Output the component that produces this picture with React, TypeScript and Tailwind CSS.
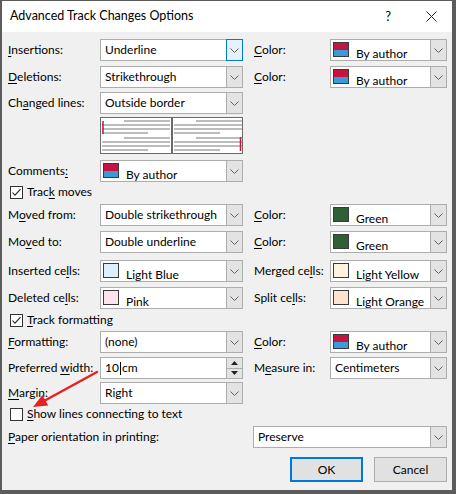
import type { ReactNode } from 'react'

const FONT = '[font-family:Lato,"Noto_Sans",sans-serif]'

function mn(text: string, k: number) {
  return (
    <>
      {text.slice(0, k)}
      <span className="underline underline-offset-[2px]">{text[k]}</span>
      {text.slice(k + 1)}
    </>
  )
}

function Chevron() {
  return (
    <svg width="9" height="5" viewBox="0 0 9 5">
      <path d="M0.5 0.5 L4.5 4.5 L8.5 0.5" fill="none" stroke="#606060" strokeWidth="1" />
    </svg>
  )
}

function Swatch({ kind }: { kind: string }) {
  if (kind === 'author') {
    return (
      <span className="flex h-[15px] w-[16px] shrink-0 flex-col border border-[#3a3a3a]">
        <span className="flex-1 bg-[#c4143f]" />
        <span className="flex-1 bg-[#3d9ad8]" />
      </span>
    )
  }
  return <span className={`h-[15px] w-[16px] shrink-0 border border-[#3a3a3a] ${kind}`} />
}

interface ComboProps {
  w: string
  text: string
  swatch?: string
  focus?: boolean
  pad?: string
}

function Combo({ w, text, swatch, focus, pad = 'pl-[4px]' }: ComboProps) {
  return (
    <div className={`flex h-[22px] shrink-0 ${w}`}>
      {swatch ? (
        <div className="flex flex-1 items-start gap-[7px] border border-r-0 border-[#adadad] bg-white pl-[2px] pt-[2px]">
          <Swatch kind={swatch} />
          <span className="mt-[4px] leading-[15px]">{text}</span>
        </div>
      ) : (
        <div className={`flex flex-1 items-center border border-r-0 border-[#adadad] bg-white ${pad}`}>{text}</div>
      )}
      <div
        className={`flex w-[17px] items-center justify-center border ${
          focus ? 'border-[#0078d7] bg-[#e5f1fb]' : 'border-[#adadad] bg-[#e3e3e3]'
        }`}
      >
        <Chevron />
      </div>
    </div>
  )
}

function Check({ on }: { on?: boolean }) {
  return (
    <span className="flex h-[13px] w-[13px] shrink-0 items-center justify-center border border-[#333333] bg-white">
      {on && (
        <svg width="11" height="11" viewBox="0 0 11 11">
          <path d="M1.5 5.5 L4 8.2 L9.5 2.2" fill="none" stroke="#222222" strokeWidth="1.1" />
        </svg>
      )}
    </span>
  )
}

function Row({ gap, children }: { gap: string; children: ReactNode }) {
  return <div className={`flex h-[22px] items-center ${gap}`}>{children}</div>
}

function Label({ children }: { children: ReactNode }) {
  return <div className="w-[92px] shrink-0 whitespace-nowrap">{children}</div>
}

function RLabel({ children }: { children: ReactNode }) {
  return <div className="ml-[11px] w-[76px] shrink-0 whitespace-nowrap">{children}</div>
}

function Preview() {
  const lines = (x: number) => (
    <g stroke="#a6a6a6" strokeWidth="1.6">
      <line x1={x + 23} y1="4" x2={x + 69} y2="4" />
      <line x1={x + 1} y1="8" x2={x + 69} y2="8" />
      <line x1={x + 1} y1="12" x2={x + 69} y2="12" />
      <line x1={x + 1} y1="16" x2={x + 47} y2="16" />
      <line x1={x + 23} y1="21" x2={x + 69} y2="21" />
      <line x1={x + 1} y1="25" x2={x + 69} y2="25" />
      <line x1={x + 1} y1="29" x2={x + 69} y2="29" />
      <line x1={x + 1} y1="33" x2={x + 47} y2="33" />
    </g>
  )
  return (
    <svg width="143" height="37" viewBox="0 0 143 37" className="block">
      <rect x="0.5" y="0.5" width="142" height="36" fill="#ffffff" stroke="#6b6b6b" />
      <line x1="72" y1="0" x2="72" y2="37" stroke="#6b6b6b" strokeWidth="2" />
      {lines(1)}
      {lines(73)}
      <line x1="3" y1="4" x2="3" y2="17" stroke="#c4143f" strokeWidth="1.5" />
      <line x1="140.5" y1="20" x2="140.5" y2="34" stroke="#c4143f" strokeWidth="1.5" />
    </svg>
  )
}

export default function App() {
  return (
    <div className={`relative h-[494px] w-[456px] overflow-hidden bg-[#5c5c5c] pt-[1px] text-[12px] text-black ${FONT}`}>
      <div className="ml-[2px] flex h-[489px] w-[450px] flex-col bg-[#f0f0f0]">
        <div className="flex h-[31px] items-center bg-white pl-[8px]">
          <span className="text-[12.5px]">Advanced Track Changes Options</span>
          <span className="ml-auto text-[13px]">?</span>
          <svg width="11" height="11" viewBox="0 0 11 11" className="ml-[35px] mr-[15px]">
            <path d="M0.5 0.5 L10.5 10.5 M10.5 0.5 L0.5 10.5" stroke="#222" strokeWidth="1" />
          </svg>
        </div>

        <div className="flex flex-col pl-[6px] pr-[5px] pt-[7px]">
          <Row gap="">
            <Label>{mn('Insertions:', 0)}</Label>
            <Combo w="w-[143px]" text="Underline" focus />
            <RLabel>{mn('Color:', 0)}</RLabel>
            <Combo w="w-[117px]" text="By author" swatch="author" />
          </Row>
          <Row gap="mt-[5px]">
            <Label>{mn('Deletions:', 0)}</Label>
            <Combo w="w-[143px]" text="Strikethrough" />
            <RLabel>{mn('Color:', 0)}</RLabel>
            <Combo w="w-[117px]" text="By author" swatch="author" />
          </Row>
          <Row gap="mt-[4px]">
            <Label>{mn('Changed lines:', 2)}</Label>
            <Combo w="w-[143px]" text="Outside border" />
          </Row>
          <div className="mt-[3px] flex">
            <div className="w-[92px]" />
            <Preview />
          </div>
          <Row gap="mt-[6px]">
            <Label>{mn('Comments:', 8)}</Label>
            <Combo w="w-[143px]" text="By author" swatch="author" />
          </Row>
          <div className="mt-[2px] flex h-[16px] items-center gap-[4px] pl-[2px]">
            <Check on />
            <span>{mn('Track moves', 4)}</span>
          </div>
          <Row gap="mt-[4px]">
            <Label>{mn('Moved from:', 1)}</Label>
            <Combo w="w-[143px]" text="Double strikethrough" />
            <RLabel>{mn('Color:', 0)}</RLabel>
            <Combo w="w-[117px]" text="Green" swatch="bg-[#2e5f35]" />
          </Row>
          <Row gap="mt-[5px]">
            <Label>{mn('Moved to:', 2)}</Label>
            <Combo w="w-[143px]" text="Double underline" />
            <RLabel>{mn('Color:', 0)}</RLabel>
            <Combo w="w-[117px]" text="Green" swatch="bg-[#2e5f35]" />
          </Row>
          <Row gap="mt-[7px]">
            <Label>{mn('Inserted cells:', 11)}</Label>
            <Combo w="w-[143px]" text="Light Blue" swatch="bg-[#ddeefc]" />
            <RLabel>{mn('Merged cells:', 9)}</RLabel>
            <Combo w="w-[117px]" text="Light Yellow" swatch="bg-[#fff3dd]" />
          </Row>
          <Row gap="mt-[5px]">
            <Label>{mn('Deleted cells:', 10)}</Label>
            <Combo w="w-[143px]" text="Pink" swatch="bg-[#fce4ee]" />
            <RLabel>{mn('Split cells:', 8)}</RLabel>
            <Combo w="w-[117px]" text="Light Orange" swatch="bg-[#fde2d0]" />
          </Row>
          <div className="mt-[3px] flex h-[16px] items-center gap-[4px] pl-[2px]">
            <Check on />
            <span>{mn('Track formatting', 0)}</span>
          </div>
          <Row gap="mt-[3px]">
            <Label>{mn('Formatting:', 0)}</Label>
            <Combo w="w-[143px]" text="(none)" />
            <RLabel>{mn('Color:', 0)}</RLabel>
            <Combo w="w-[117px]" text="By author" swatch="author" />
          </Row>
          <Row gap="mt-[4px]">
            <Label>{mn('Preferred width:', 10)}</Label>
            <div className="flex h-[22px] w-[143px] shrink-0">
              <div className="flex flex-1 items-center border border-r-0 border-[#adadad] bg-white pl-[4px]">
                10<span className="mx-[1px] h-[13px] w-px bg-black" />
                cm
              </div>
              <div className="flex w-[17px] flex-col border border-[#adadad] bg-[#e3e3e3]">
                <div className="flex flex-1 items-center justify-center border-b border-[#adadad]">
                  <svg width="7" height="4" viewBox="0 0 7 4">
                    <path d="M0 4 L3.5 0 L7 4 Z" fill="#222" />
                  </svg>
                </div>
                <div className="flex flex-1 items-center justify-center">
                  <svg width="7" height="4" viewBox="0 0 7 4">
                    <path d="M0 0 L3.5 4 L7 0 Z" fill="#222" />
                  </svg>
                </div>
              </div>
            </div>
            <RLabel>{mn('Measure in:', 1)}</RLabel>
            <Combo w="w-[117px]" text="Centimeters" />
          </Row>
          <Row gap="mt-[3px]">
            <Label>{mn('Margin:', 0)}</Label>
            <Combo w="w-[143px]" text="Right" />
          </Row>
          <div className="mt-[2px] flex h-[16px] items-center gap-[4px] pl-[2px]">
            <Check />
            <span>{mn('Show lines connecting to text', 0)}</span>
          </div>
          <Row gap="mt-[4px]">
            <div className="w-[245px] shrink-0 whitespace-nowrap">{mn('Paper orientation in printing:', 0)}</div>
            <Combo w="w-[194px]" text="Preserve" />
          </Row>
          <div className="mt-[9px] flex justify-end gap-[11px]">
            <button className="flex h-[25px] w-[73px] items-center justify-center border-2 border-[#0078d7] bg-[#e1e1e1]">
              OK
            </button>
            <button className="flex h-[25px] w-[73px] items-center justify-center border border-[#adadad] bg-[#e1e1e1]">
              Cancel
            </button>
          </div>
        </div>
      </div>

      <svg className="pointer-events-none absolute left-0 top-0" width="456" height="494" viewBox="0 0 456 494">
        <line x1="97" y1="372" x2="44" y2="401" stroke="#e42222" strokeWidth="2.5" strokeLinecap="round" />
        <polygon points="33,407 48.2,405.6 42.4,395" fill="#e42222" />
      </svg>
    </div>
  )
}
